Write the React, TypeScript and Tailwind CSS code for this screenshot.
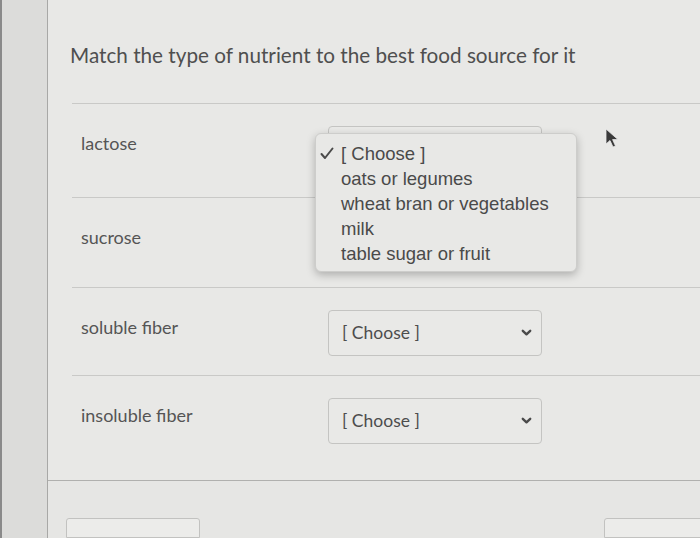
import React from "react";

// 養分とその食品源のマッチング問題（ドロップダウンが開いた状態）
const ROWS = [
  { label: "lactose", h: "h-[94px]", open: true },
  { label: "sucrose", h: "h-[90px]", open: false, hidden: true },
  { label: "soluble fiber", h: "h-[88px]", open: false },
  { label: "insoluble fiber", h: "h-[96px]", open: false },
];

const OPTIONS = ["oats or legumes", "wheat bran or vegetables", "milk", "table sugar or fruit"];

function Chevron() {
  return (
    <svg width="11" height="8" viewBox="0 0 11 8" className="text-[#4a4a4a]">
      <path d="M1.8 1.8 L5.5 5.3 L9.2 1.8" fill="none" stroke="currentColor" strokeWidth="2.4" strokeLinecap="round" strokeLinejoin="round" />
    </svg>
  );
}

function SelectBox({ open }: { open: boolean }) {
  return (
    <div className="relative mt-[22px] h-[46px] w-[214px]">
      <div className="flex h-full items-center justify-between rounded-[4px] border border-[#c4c4c2] bg-[#e9e9e7] pl-[13px] pr-[9px]">
        {/* 開いている時は選択肢の一覧が上に被さる */}
        {!open && <span className="text-[17.5px] text-[#4d4d4d]">[ Choose ]</span>}
        {!open && <Chevron />}
      </div>
      {open && <Popup />}
    </div>
  );
}

function Check() {
  return (
    <svg width="14" height="13" viewBox="0 0 14 13" className="ml-[4px] mr-[7px]">
      <path d="M1.5 7 L5 11 L12.5 1.5" fill="none" stroke="#4a4a4a" strokeWidth="2" strokeLinecap="round" strokeLinejoin="round" />
    </svg>
  );
}

function Popup() {
  return (
    <div
      className="absolute left-[-13px] top-[7px] z-10 w-[262px] rounded-[6px] border border-[#cdcdcb] bg-[#e8e8e6] pb-[5px] pt-[7px] shadow-[0_3px_8px_rgba(0,0,0,0.25)]"
      style={{ fontFamily: '"Liberation Sans", Arial, sans-serif' }}
    >
      <div className="flex h-[25px] items-center text-[18.5px] text-[#4a4a4a]">
        <Check />
        <span>[ Choose ]</span>
      </div>
      {OPTIONS.map((o) => (
        <div key={o} className="flex h-[25px] items-center pl-[25px] text-[18.5px] text-[#4a4a4a]">
          {o}
        </div>
      ))}
    </div>
  );
}

function Cursor() {
  return (
    <svg width="16" height="20" viewBox="0 0 16 20" className="absolute left-[604px] top-[128px]">
      <path d="M2 1 L2 16 L6 12.5 L9 19 L11.5 18 L8.6 11.6 L14 11.6 Z" fill="#3a3a3a" stroke="#eaeaea" strokeWidth="0.8" />
    </svg>
  );
}

export default function App() {
  return (
    <div
      className="relative flex h-[538px] w-[700px] overflow-hidden bg-[#e6e6e4]"
      style={{ fontFamily: 'Lato, "Open Sans", sans-serif' }}
    >
      {/* 左の余白 */}
      <div className="w-[48px] shrink-0 border-l-2 border-r border-l-[#8a8a8a] border-r-[#a8a8a6] bg-[#dcdcda]" />

      <div className="flex flex-1 flex-col">
        {/* 問題カード */}
        <div className="h-[487px] border-b border-[#b0b0ae] bg-[#e8e8e6] pl-[22px]">
          <h1 className="pt-[40px] text-[20.7px] leading-[30px] text-[#4f4f4f]">
            Match the type of nutrient to the best food source for it
          </h1>
          <div className="ml-[2px] mt-[33px]">
            {ROWS.map((r) => (
              <div key={r.label} className={`flex border-t border-[#c9c9c7] ${r.h}`}>
                <div className="w-[256px] pl-[9px] pt-[28px] text-[18px] leading-[22px] text-[#555]">{r.label}</div>
                {r.hidden ? null : <SelectBox open={r.open} />}
              </div>
            ))}
          </div>
        </div>

        {/* 下のボタン */}
        <div className="flex justify-between pl-[18px] pt-[37px]">
          <div className="h-[20px] w-[134px] rounded-t-[3px] border border-[#c2c2c0] bg-[#ececea]" />
          <div className="-mr-[4px] h-[20px] w-[100px] rounded-t-[3px] border border-[#c2c2c0] bg-[#ececea]" />
        </div>
      </div>

      <Cursor />
    </div>
  );
}
